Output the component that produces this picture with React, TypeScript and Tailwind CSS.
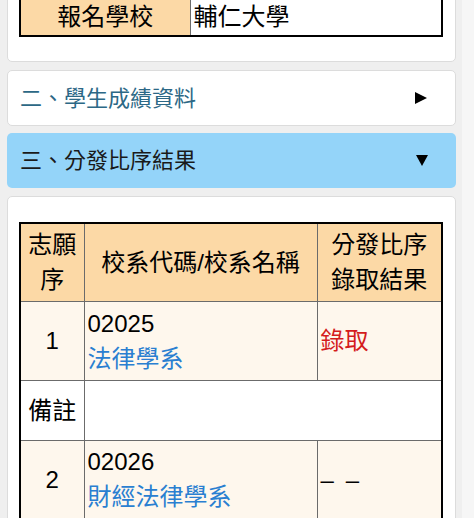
import React from "react";

const font = { fontFamily: '"Liberation Sans", "Noto Sans CJK TC", sans-serif' };

function Triangle({ open }: { open: boolean }) {
  return open ? (
    <svg width="12" height="11" viewBox="0 0 12 11" className="text-black">
      <path d="M0 0H12L6 11Z" fill="currentColor" />
    </svg>
  ) : (
    <svg width="12" height="12" viewBox="0 0 12 12" className="text-black">
      <path d="M0 0L12 6L0 12Z" fill="currentColor" />
    </svg>
  );
}

export default function App() {
  const cell = "border border-[#6b6b6b]";

  return (
    <div className="flex h-[518px] w-[474px] overflow-hidden bg-[#efefef] text-black" style={font}>
      <div className="flex w-[462px] flex-col gap-[8px] pl-[7px] pr-[6px]">
        {/* 一、報名資料 (scrolled) */}
        <div className="-mt-[28px] rounded-[5px] border border-[#dcdcdc] bg-white px-[11px] pb-[24px] pt-[24px]">
          <table className="w-[424px] border-collapse border-2 border-black text-[24px] leading-[32px]">
            <tbody>
              <tr className="h-[38px]">
                <td className={`${cell} w-[170px] bg-[#fcd9a6] text-center`}>報名學校</td>
                <td className={`${cell} px-[3px]`}>輔仁大學</td>
              </tr>
            </tbody>
          </table>
        </div>

        {/* 二、學生成績資料 */}
        <div className="flex h-[56px] shrink-0 items-center justify-between rounded-[5px] border border-[#dcdcdc] bg-white pl-[12px] pr-[28px]">
          <span className="text-[22px] text-[#2c6886]">二、學生成績資料</span>
          <Triangle open={false} />
        </div>

        {/* 三、分發比序結果 */}
        <div className="-mt-px flex h-[55px] shrink-0 items-center justify-between rounded-[5px] bg-[#94d4f9] pl-[13px] pr-[28px]">
          <span className="text-[22px] text-[#1a1a1a]">三、分發比序結果</span>
          <Triangle open={true} />
        </div>

        <div className="rounded-[5px] border border-[#dcdcdc] bg-white px-[11px] pt-[25px]">
          <table className="w-[424px] border-collapse border-2 border-black text-[24px] leading-[35px]">
            <thead>
              <tr className="h-[78px] bg-[#fcd9a6]">
                <th className={`${cell} w-[64px] font-normal`}>
                  志願
                  <br />序
                </th>
                <th className={`${cell} w-[233px] font-normal`}>校系代碼/校系名稱</th>
                <th className={`${cell} font-normal`}>
                  分發比序
                  <br />
                  錄取結果
                </th>
              </tr>
            </thead>
            <tbody>
              <tr className="h-[79px] bg-[#fef7ed]">
                <td className={`${cell} text-center`}>1</td>
                <td className={`${cell} px-[3px]`}>
                  <div>02025</div>
                  <div className="text-[#2a7fd1]">法律學系</div>
                </td>
                <td className={`${cell} px-[3px] text-[#d41c1c]`}>錄取</td>
              </tr>
              <tr className="h-[60px] bg-white">
                <td className={`${cell} text-center`}>備註</td>
                <td className={cell} colSpan={2}></td>
              </tr>
              <tr className="h-[78px] bg-[#fef7ed]">
                <td className={`${cell} text-center`}>2</td>
                <td className={`${cell} px-[3px]`}>
                  <div>02026</div>
                  <div className="text-[#2a7fd1]">財經法律學系</div>
                </td>
                <td className={`${cell} px-[3px]`}>
                  <span className="inline-flex gap-[12px]">
                    <span>–</span>
                    <span>–</span>
                  </span>
                </td>
              </tr>
              <tr className="h-[78px] bg-white">
                <td className={cell}></td>
                <td className={cell} colSpan={2}></td>
              </tr>
            </tbody>
          </table>
        </div>
      </div>
      <div className="flex-1 bg-[#f6f6f6]" />
    </div>
  );
}
